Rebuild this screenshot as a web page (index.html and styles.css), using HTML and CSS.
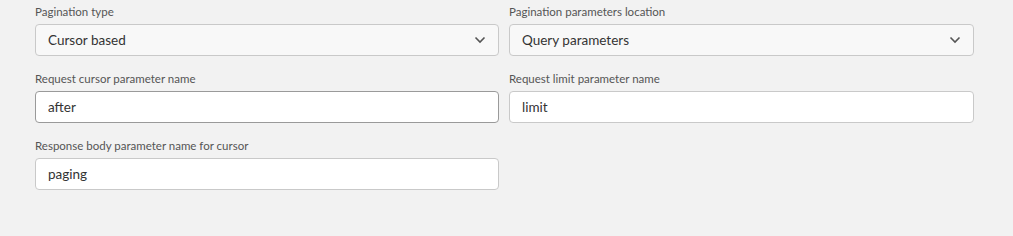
FILE: index.html
```
<!DOCTYPE html>
<html lang="en">
<head>
    <meta charset="UTF-8">
    <title>Pagination</title>
    <link rel="stylesheet" href="styles.css">
</head>
<body>

<div class="pagination-form">
    <div class="field">
        <label>Pagination type</label>
        <div class="select">
            <span>Cursor based</span>
            <svg width="12" height="8" viewBox="0 0 12 8"><path d="M1.5 1.5 L6 6 L10.5 1.5" fill="none" stroke="#555" stroke-width="1.6"/></svg>
        </div>
    </div>
    <div class="field">
        <label>Pagination parameters location</label>
        <div class="select">
            <span>Query parameters</span>
            <svg width="12" height="8" viewBox="0 0 12 8"><path d="M1.5 1.5 L6 6 L10.5 1.5" fill="none" stroke="#555" stroke-width="1.6"/></svg>
        </div>
    </div>
    <div class="field">
        <label>Request cursor parameter name</label>
        <input type="text" class="hovered" value="after">
    </div>
    <div class="field">
        <label>Request limit parameter name</label>
        <input type="text" value="limit">
    </div>
    <div class="field">
        <label>Response body parameter name for cursor</label>
        <input type="text" value="paging">
    </div>
</div>

</body>
</html>
```

FILE: styles.css
```
body {
    font-family: Lato, sans-serif;
    background-color: #f2f2f2;
    color: #333;
    margin: 0;
}
.pagination-form {
    display: grid;
    grid-template-columns: 464px 465px;
    column-gap: 10px;
    row-gap: 15px;
    padding: 4px 0 0 35px;
}
.field {
    display: flex;
    flex-direction: column;
}
label {
    font-size: 11.5px;
    color: #555;
    height: 20px;
    line-height: 15px;
}
.select {
    height: 32px;
    box-sizing: border-box;
    border: 1px solid #c9c9c9;
    border-radius: 4px;
    background: #f8f8f8;
    display: flex;
    align-items: center;
    justify-content: space-between;
    padding: 0 12px 1px 12px;
    font-size: 13.5px;
    color: #333;
}
input {
    height: 32px;
    box-sizing: border-box;
    border: 1px solid #c9c9c9;
    border-radius: 4px;
    background: white;
    padding: 0 12px 1px;
    font-family: inherit;
    font-size: 13.5px;
    color: #333;
    outline: none;
}
input.hovered {
    border-color: #9a9a9a;
}
```
